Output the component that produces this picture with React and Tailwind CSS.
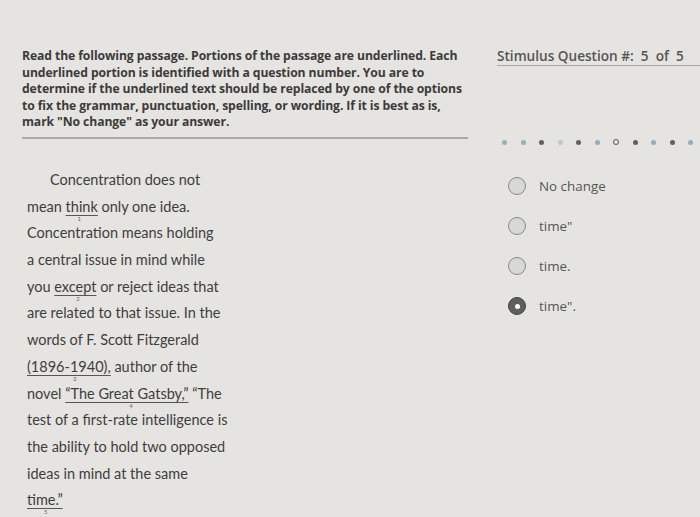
const lines = [
  { indent: true, parts: ['Concentration does not'] },
  { parts: ['mean ', { u: 'think', n: '1', at: 'left-[12px]' }, ' only one idea.'] },
  { parts: ['Concentration means holding'] },
  { parts: ['a central issue in mind while'] },
  { parts: ['you ', { u: 'except', n: '2', at: 'left-[22px]' }, ' or reject ideas that'] },
  { parts: ['are related to that issue. In the'] },
  { parts: ['words of F. Scott Fitzgerald'] },
  { parts: [{ u: '(1896-1940),', n: '3', at: 'left-[46px]' }, ' author of the'] },
  { parts: ['novel ', { u: '\u201cThe Great Gatsby,\u201d', n: '4', at: 'left-[64px]' }, ' \u201cThe'] },
  { parts: ['test of a first-rate intelligence is'] },
  { parts: ['the ability to hold two opposed'] },
  { parts: ['ideas in mind at the same'] },
  { parts: [{ u: 'time.\u201d', n: '5', at: 'left-[17px]' }] },
];

const options = ['No change', 'time"', 'time.', 'time".'];

const dots = ['light', 'light', 'dark', 'pale', 'dark', 'light', 'ring', 'dark', 'light', 'dark', 'light'];

function Dot({ kind }) {
  if (kind === 'ring') {
    return <span className="w-[6px] h-[6px] rounded-full border-[1.5px] border-[#555]" />;
  }
  const color = kind === 'dark' ? 'bg-[#5d6163]' : kind === 'pale' ? 'bg-[#b7c9cf]' : 'bg-[#8fb2be]';
  return <span className={`w-[5px] h-[5px] rounded-full ${color}`} />;
}

export default function App() {
  return (
    <div className="w-[700px] h-[517px] overflow-hidden bg-[#e5e4e0] flex" style={{ fontFamily: '"Open Sans", sans-serif' }}>
      <div className="w-[468px] pl-[22px] pt-[48px] flex flex-col">
        <p className="text-[12.2px] leading-[16.6px] font-bold text-[#3b3b3b] tracking-[-0.1px]">
          Read the following passage. Portions of the passage are underlined. Each underlined portion is identified with a question number. You are to determine if the underlined text should be replaced by one of the options to fix the grammar, punctuation, spelling, or wording. If it is best as is, mark "No change" as your answer.
        </p>
        <div className="mt-[6px] h-[2px] bg-[#a9a9a6]" />
        <div className="mt-[28px] pl-[5px] text-[14.5px] leading-[26.7px] text-[#3e3e3e]" style={{ fontFamily: 'Lato, sans-serif' }}>
          {lines.map((line, i) => (
            <div key={i} className={line.indent ? 'pl-[23px]' : ''}>
              {line.parts.map((p, j) =>
                typeof p === 'string' ? (
                  <span key={j}>{p}</span>
                ) : (
                  <span key={j} className="relative underline decoration-[#555] underline-offset-[3px]">
                    {p.u}
                    <span className={`absolute top-[18px] ${p.at} text-[6px] leading-none text-[#666]`}>{p.n}</span>
                  </span>
                )
              )}
            </div>
          ))}
        </div>
      </div>
      <div className="flex-1 pt-[46px] pl-[29px] flex flex-col">
        <div className="border-b border-[#a9a9a6] leading-[19px]">
          <span className="text-[13.6px] font-semibold text-[#555]">Stimulus Question #:&nbsp; 5&nbsp; of&nbsp; 5</span>
        </div>
        <div className="mt-[73px] pl-[5px] flex items-center gap-[13.5px]">
          {dots.map((d, i) => (
            <Dot key={i} kind={d} />
          ))}
        </div>
        <div className="mt-[32px] pl-[11px] flex flex-col gap-[22px]">
          {options.map((o, i) => (
            <div key={o} className="flex items-center gap-[13px] h-[18px]">
              {i === 3 ? (
                <span className="w-[18px] h-[18px] rounded-full bg-[#5f5f5f] border border-[#444] flex items-center justify-center">
                  <span className="w-[5px] h-[5px] rounded-full bg-white" />
                </span>
              ) : (
                <span className="w-[18px] h-[18px] rounded-full bg-[#d8d8d6] border-[1.5px] border-[#888]" />
              )}
              <span className="text-[13.4px] text-[#555]">{o}</span>
            </div>
          ))}
        </div>
      </div>
    </div>
  );
}
